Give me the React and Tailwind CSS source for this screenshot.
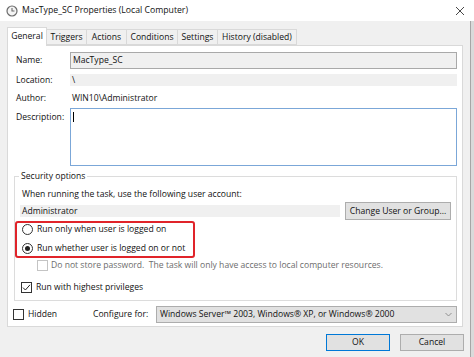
const tabs = [
  ['General', 40],
  ['Triggers', 40],
  ['Actions', 40],
  ['Conditions', 51],
  ['Settings', 40],
  ['History (disabled)', 79],
]

function Radio({ checked }) {
  return (
    <span className="flex h-[11px] w-[11px] shrink-0 items-center justify-center rounded-full border border-[#333] bg-white">
      {checked && <span className="h-[5px] w-[5px] rounded-full bg-[#222]" />}
    </span>
  )
}

function Check({ checked, disabled }) {
  return (
    <span
      className={
        'flex h-[11px] w-[11px] shrink-0 items-center justify-center border bg-white ' +
        (disabled ? 'border-[#c4c4c4]' : 'border-[#333]')
      }
    >
      {checked && (
        <svg width="9" height="9" viewBox="0 0 9 9">
          <path d="M1 4.6 L3.4 7 L8 1.8" fill="none" stroke="#222" strokeWidth="1" />
        </svg>
      )}
    </span>
  )
}

export default function App() {
  return (
    <div className="flex h-[357px] w-[474px] flex-col overflow-hidden bg-[#f0f0f0] font-['Open_Sans',sans-serif] text-[8.6px] leading-none text-[#111]">
      {/* title bar */}
      <div className="flex h-[21px] shrink-0 items-center bg-white pl-[6px] pr-[9px]">
        <svg width="12" height="12" viewBox="0 0 12 12">
          <circle cx="6" cy="6" r="5" fill="#f4f4f4" stroke="#6b6b6b" strokeWidth="1.2" />
          <path d="M6 3 V6 H8.5" fill="none" stroke="#6b6b6b" strokeWidth="1.1" />
        </svg>
        <span className="ml-[4px] text-[8.7px] text-[#111]">MacType_SC Properties (Local Computer)</span>
        <svg className="ml-auto" width="10" height="10" viewBox="0 0 10 10">
          <path d="M1 1 L9 9 M9 1 L1 9" stroke="#333" strokeWidth="0.9" />
        </svg>
      </div>

      <div className="flex flex-1">
        <div className="flex flex-1 flex-col px-[7px]">
          {/* tabs */}
          <div className="mt-[6px] flex h-[18px] items-end">
            {tabs.map(([t, w], i) => (
              <div
                key={t}
                style={{ width: w }}
                className={
                  'flex items-center justify-center border border-[#d9d9d9] ' +
                  (i === 0
                    ? 'relative z-10 -mb-px h-[19px] border-b-0 bg-white pb-[2px]'
                    : 'h-[16px] border-l-0 bg-[#f0f0f0]')
                }
              >
                {t}
              </div>
            ))}
          </div>

          {/* panel */}
          <div className="flex h-[282px] flex-col border border-[#d9d9d9] bg-white pl-[8px] pr-[5px]">
            <div className="mt-[6px] flex h-[17px] items-center">
              <span className="w-[54px]">Name:</span>
              <div className="flex h-full flex-1 items-center border border-[#a9a9a9] bg-[#f0f0f0] pl-[2px]">MacType_SC</div>
            </div>
            <div className="mt-[5px] flex h-[12px] items-center">
              <span className="w-[54px]">Location:</span>
              <div className="flex h-full flex-1 items-center bg-[#f0f0f0] pl-[2px]">\</div>
            </div>
            <div className="mt-[6px] flex h-[12px] items-center">
              <span className="w-[54px]">Author:</span>
              <span className="pl-[2px]">WIN10\Administrator</span>
            </div>
            <div className="mt-[4px] flex h-[58px]">
              <span className="mt-[5px] w-[54px]">Description:</span>
              <div className="flex-1 border border-[#7ba7d8] bg-white pl-[2px] pt-[3px]">
                <div className="h-[10px] w-px bg-black" />
              </div>
            </div>

            {/* security options */}
            <fieldset className="ml-[-2px] mt-[6px] h-[129px] border border-[#dcdcdc] pl-0">
              <legend className="ml-[4px] px-[2px]">Security options</legend>
              <div className="ml-[7px] mt-[9px]">When running the task, use the following user account:</div>
              <div className="mt-[4px] flex items-center">
                <div className="ml-[5px] flex h-[12px] w-[320px] items-center bg-[#f0f0f0] pl-[2px]">Administrator</div>
                <div className="ml-[5px] flex h-[18px] w-[106px] items-center justify-center border border-[#adadad] bg-[#e1e1e1]">
                  Change User or Group...
                </div>
              </div>
              <div className="mt-[1px] flex w-[180px] flex-col gap-[7.5px] rounded-[3px] border-2 border-[#e0242a] pb-[2.5px] pl-[5px] pt-[1px]">
                <div className="flex items-center gap-[4px]">
                  <Radio />
                  <span>Run only when user is logged on</span>
                </div>
                <div className="flex items-center gap-[4px]">
                  <Radio checked />
                  <span>Run whether user is logged on or not</span>
                </div>
              </div>
              <div className="ml-[22px] mt-[1.5px] flex items-center gap-[3px] text-[#6d6d6d]">
                <Check disabled />
                <span className="whitespace-pre">Do not store password.  The task will only have access to local computer resources.</span>
              </div>
              <div className="ml-[6px] mt-[11px] flex items-center gap-[4px]">
                <Check checked />
                <span>Run with highest privileges</span>
              </div>
            </fieldset>

            <div className="mt-[5px] flex h-[17px] items-center">
              <div className="ml-[-3px] flex w-[80px] items-center gap-[4px]">
                <Check />
                <span>Hidden</span>
              </div>
              <span className="w-[63px]">Configure for:</span>
              <div className="flex h-full flex-1 items-center justify-between border border-[#adadad] bg-[#e1e1e1] pl-[3px] pr-[4px]">
                <span>Windows Server™ 2003, Windows® XP, or Windows® 2000</span>
                <svg width="7" height="5" viewBox="0 0 7 5">
                  <path d="M0.5 1 L3.5 4 L6.5 1" fill="none" stroke="#888" strokeWidth="0.9" />
                </svg>
              </div>
            </div>
          </div>

          {/* buttons */}
          <div className="mr-[-1px] mt-[7px] flex justify-end gap-[10px]">
            <div className="flex h-[17px] w-[64px] items-center justify-center border border-[#0078d7] bg-[#e1e1e1]">OK</div>
            <div className="flex h-[17px] w-[64px] items-center justify-center border border-[#adadad] bg-[#e1e1e1]">Cancel</div>
          </div>
        </div>
        <div className="w-[4px] border-l border-[#a6a6a6] bg-[#dadada]" />
      </div>
    </div>
  )
}
